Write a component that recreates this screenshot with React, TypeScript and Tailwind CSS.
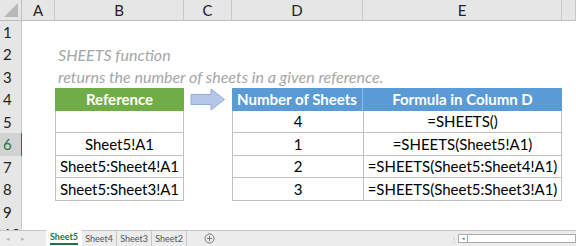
import React from 'react';

const font = "font-['Lato','Liberation_Sans',sans-serif]";

const cols = ['A', 'B', 'C', 'D', 'E', ''];
const rowHeights = ['h-[22px]', 'h-[23px]', 'h-[22px]', 'h-[23px]', 'h-[22px]', 'h-[23px]', 'h-[22px]', 'h-[23px]', 'h-[22px]', 'h-[22px]'];

const tableRows = [
  { ref: '', count: '4', formula: '=SHEETS()' },
  { ref: 'Sheet5!A1', count: '1', formula: '=SHEETS(Sheet5!A1)' },
  { ref: 'Sheet5:Sheet4!A1', count: '2', formula: '=SHEETS(Sheet5:Sheet4!A1)' },
  { ref: 'Sheet5:Sheet3!A1', count: '3', formula: '=SHEETS(Sheet5:Sheet3!A1)' },
];

function Arrow() {
  return (
    <svg width="36" height="23" viewBox="0 0 36 23">
      <path d="M1 6.5 H21 V1 L34.5 11.5 L21 22 V16.5 H1 Z" fill="#b4c7e7" stroke="#8faadc" strokeWidth="1" />
    </svg>
  );
}

function RowCells({ n }: { n: number }) {
  const h = rowHeights[n - 1];
  const head = (
    <div
      className={`${h} flex items-center pl-[3px] text-[15px] border-r ${
        n === 6 ? 'bg-[#d2d2d2] text-[#217346] border-[#217346]' : 'bg-[#e6e6e6] text-[#222] border-[#c8c8c8]'
      }`}
    >
      {n}
    </div>
  );

  if (n === 2 || n === 3) {
    return (
      <>
        {head}
        <div className={h} />
        <div className={`${h} col-span-5 flex items-center pl-[3px] italic text-[16px] text-[#a6a6a6] whitespace-nowrap`}>
          {n === 2 ? 'SHEETS function' : 'returns the number of sheets in a given reference.'}
        </div>
      </>
    );
  }

  if (n === 4) {
    return (
      <>
        {head}
        <div className={h} />
        <div className={`${h} bg-[#70ad47] text-white font-bold text-[15px] flex items-center justify-center`}>Reference</div>
        <div className={`${h} flex items-center justify-center`}>
          <Arrow />
        </div>
        <div className={`${h} bg-[#5b9bd5] text-white font-bold text-[15px] flex items-center justify-center border-r border-white/30`}>
          Number of Sheets
        </div>
        <div className={`${h} bg-[#5b9bd5] text-white font-bold text-[15px] flex items-center justify-center`}>
          Formula in Column D
        </div>
        <div className={h} />
      </>
    );
  }

  if (n >= 5 && n <= 8) {
    const r = tableRows[n - 5];
    const cell = `${h} flex items-center justify-center text-[15px] text-black border-b border-[#bfbfbf] whitespace-nowrap`;
    return (
      <>
        {head}
        <div className={h} />
        <div className={`${cell} border-l border-r`}>{r.ref}</div>
        <div className={h} />
        <div className={`${cell} border-l`}>{r.count}</div>
        <div className={`${cell} border-l border-r`}>{r.formula}</div>
        <div className={h} />
      </>
    );
  }

  return (
    <>
      {head}
      <div className={`${h} col-span-6`} />
    </>
  );
}

export default function App() {
  return (
    <div className={`w-[576px] h-[246px] bg-white overflow-hidden flex flex-col ${font}`}>
      <div className="flex-1 overflow-hidden">
        <div className="grid grid-cols-[22px_33px_129px_48px_131px_199px_14px]">
          {/* column headers */}
          <div className="h-[21px] bg-[#e6e6e6] border-r border-b border-[#bdbdbd] relative overflow-hidden">
            <div className="absolute right-[3px] bottom-[3px] w-0 h-0 border-l-[14px] border-l-transparent border-b-[14px] border-b-[#b8b8b8]" />
          </div>
          {cols.map((c, i) => (
            <div
              key={i}
              className="h-[21px] bg-[#e6e6e6] border-r border-b border-[#c8c8c8] border-b-[#bdbdbd] flex items-center justify-center text-[15px] text-[#222]"
            >
              {c}
            </div>
          ))}
          {Array.from({ length: 10 }, (_, i) => (
            <RowCells key={i} n={i + 1} />
          ))}
        </div>
      </div>

      {/* sheet tabs */}
      <div className="h-[16px] shrink-0 bg-[#ececec] border-t border-[#c6c6c6] flex items-stretch text-[9px] text-[#555]">
        <div className="w-[46px] flex items-center gap-[11px] pl-[6px] text-[7px] text-[#b5b5b5]">
          <span>◂</span>
          <span>▸</span>
        </div>
        <div className="w-[36px] bg-white flex items-start justify-center -mt-px">
          <span className="mt-[2px] font-bold text-[#217346] border-b-2 border-[#217346] leading-[10px] pb-[1px]">Sheet5</span>
        </div>
        {['Sheet4', 'Sheet3', 'Sheet2'].map((s) => (
          <div key={s} className="w-[35px] flex items-center justify-center border-r border-[#c6c6c6]">
            {s}
          </div>
        ))}
        <div className="w-[44px] flex items-center justify-center">
          <svg width="11" height="11" viewBox="0 0 11 11">
            <circle cx="5.5" cy="5.5" r="4.5" fill="none" stroke="#777" strokeWidth="1" />
            <path d="M5.5 3 V8 M3 5.5 H8" stroke="#777" strokeWidth="1" />
          </svg>
        </div>
        <div className="flex-1" />
        <div className="w-[8px] flex items-center justify-center text-[#bbb] text-[8px]">⋮</div>
        <div className="w-[118px] flex items-center">
          <div className="w-full h-[9px] bg-white border border-[#ababab] flex">
            <div className="w-[9px] border-r border-[#ababab] flex items-center justify-center text-[5px] text-[#666]">◂</div>
          </div>
        </div>
      </div>
    </div>
  );
}
